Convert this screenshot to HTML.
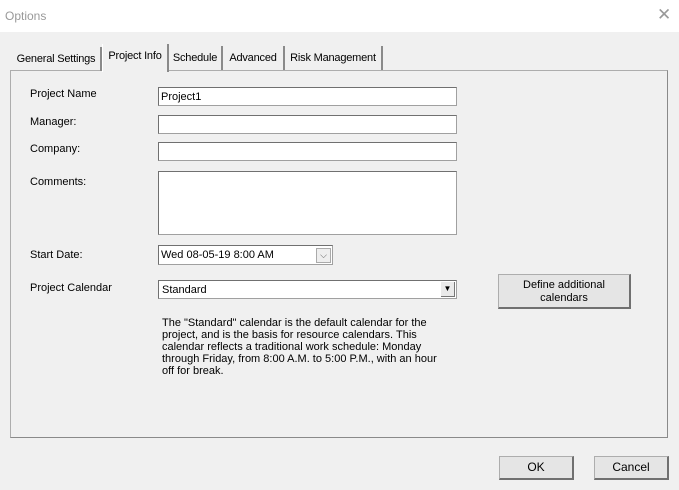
<html><head><style>
body{margin:0;width:679px;height:490px;background:#f0f0f0;font-family:"Liberation Sans",sans-serif;font-size:11px;color:#000;position:relative;overflow:hidden}
.a{position:absolute;white-space:nowrap}
.inp{position:absolute;background:#fff;border:1px solid #a0a0a0;border-top-color:#707070;border-left-color:#707070;box-sizing:border-box;white-space:nowrap}
.btn{position:absolute;background:#e5e5e5;border:1px solid #adadad;border-right:2px solid #707070;border-bottom:2px solid #707070;box-sizing:border-box;text-align:center}
.tab{position:absolute;top:46px;height:24px;border-right:2px solid #8a8a8a;box-sizing:border-box;line-height:24px;text-align:center;white-space:nowrap;letter-spacing:-0.2px}
</style></head><body>
<div class="a" style="left:0;top:0;width:679px;height:32px;background:#fff"></div>
<div class="a" style="left:5px;top:9px;color:#999;font-size:12px">Options</div>
<div class="a" style="left:657px;top:5px;color:#999;font-size:17px">✕</div>
<div class="a" style="left:10px;top:70px;width:656px;height:366px;border:1px solid #adadad;border-right-color:#8a8a8a;border-bottom-color:#8a8a8a"></div>
<div class="tab" style="left:12px;width:90px;top:47px">General Settings</div>
<div class="tab" style="left:102px;width:67px;top:44px;height:28px;background:#f0f0f0;border-left:1px solid #fff;line-height:24px">Project Info</div>
<div class="tab" style="left:169px;width:54px">Schedule</div>
<div class="tab" style="left:223px;width:62px">Advanced</div>
<div class="tab" style="left:285px;width:98px">Risk Management</div>
<div class="a" style="left:30px;top:88px">Project Name</div>
<div class="a" style="left:30px;top:116px">Manager:</div>
<div class="a" style="left:30px;top:143px">Company:</div>
<div class="a" style="left:30px;top:176px">Comments:</div>
<div class="a" style="left:30px;top:249px">Start Date:</div>
<div class="a" style="left:30px;top:282px">Project Calendar</div>
<div class="inp" style="left:158px;top:87px;width:299px;height:19px;padding:3px 2px">Project1</div>
<div class="inp" style="left:158px;top:115px;width:299px;height:19px"></div>
<div class="inp" style="left:158px;top:142px;width:299px;height:19px"></div>
<div class="inp" style="left:158px;top:171px;width:299px;height:64px"></div>
<div class="inp" style="left:158px;top:245px;width:175px;height:20px;padding:3px 2px">Wed 08-05-19 8:00 AM
<div class="a" style="left:157px;top:2px;width:13px;height:13px;border:1px solid #aaa;background:#eee;font-size:9px;line-height:13px;text-align:center;color:#555">⌵</div></div>
<div class="inp" style="left:158px;top:280px;width:299px;height:19px;padding:3px 3px">Standard
<div class="a" style="left:282px;top:1px;width:13px;height:14px;background:#eaeaea;border-right:1px solid #777;border-bottom:1px solid #777;font-size:8px;line-height:14px;text-align:center">▼</div></div>
<div class="btn" style="left:498px;top:274px;width:133px;height:35px;padding-top:4px;line-height:13px">Define additional<br>calendars</div>
<div class="a" style="left:162px;top:317px;line-height:12px;white-space:normal;width:280px">The "Standard" calendar is the default calendar for the project, and is the basis for resource calendars. This calendar reflects a traditional work schedule: Monday through Friday, from 8:00 A.M. to 5:00 P.M., with an hour off for break.</div>
<div class="btn" style="left:499px;top:456px;width:75px;height:24px;line-height:21px;font-size:12px">OK</div>
<div class="btn" style="left:594px;top:456px;width:75px;height:24px;line-height:21px;font-size:12px">Cancel</div>
</body></html>
